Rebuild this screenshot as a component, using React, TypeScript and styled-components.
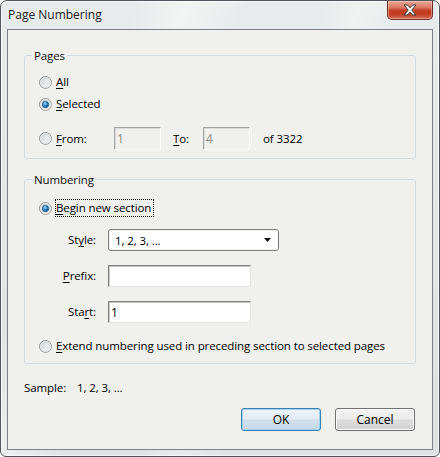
import React, { useId } from "react";
import styled, { createGlobalStyle } from "styled-components";

const GlobalStyle = createGlobalStyle`
  html, body { margin: 0; padding: 0; background: #ffffff; }
  body {
    font-family: "Open Sans", "Noto Sans", "Liberation Sans", sans-serif;
    font-size: 11.5px;
    letter-spacing: -0.1px;
    color: #000;
  }
  * { box-sizing: border-box; }
`;

const Window = styled.div`
  width: 440px;
  height: 457px;
  border: 1px solid #50565b;
  border-radius: 7px 7px 6px 6px;
  overflow: hidden;
  display: flex;
  flex-direction: column;
  background:
    linear-gradient(112deg, rgba(255,255,255,0) 22%, rgba(255,255,255,0.45) 30%, rgba(255,255,255,0) 40%, rgba(255,255,255,0) 52%, rgba(255,255,255,0.35) 58%, rgba(255,255,255,0) 66%),
    linear-gradient(180deg, #e8ebeb 0%, #e2e6e5 60%, #dde1e1 100%);
  box-shadow: inset 0 0 0 1px rgba(255, 255, 255, 0.7);
`;

const TitleBar = styled.div`
  height: 28px;
  flex: none;
  display: flex;
  align-items: flex-start;
  justify-content: space-between;
  padding-left: 7px;
`;

const Title = styled.div`
  margin-top: 6px;
  line-height: 16px;
  font-size: 12px;
  letter-spacing: 0;
  color: #1b1b1b;
  text-shadow: 0 0 6px rgba(255, 255, 255, 0.9);
`;

const CloseButton = styled.div`
  width: 46px;
  height: 19px;
  margin-right: 6px;
  display: flex;
  align-items: center;
  justify-content: center;
  border: 1px solid #6a3028;
  border-top: none;
  border-radius: 0 0 5px 5px;
  background: linear-gradient(
    180deg,
    #e9a797 0%,
    #dc7c66 35%,
    #c63f26 52%,
    #c03c22 72%,
    #d86c52 100%
  );
  box-shadow: inset 0 0 0 1px rgba(255, 220, 210, 0.45);
`;

const Client = styled.div`
  flex: 1;
  margin: 0 6px 6px;
  border: 1px solid #7b8186;
  background: #f0f0ef;
  display: flex;
  flex-direction: column;
  padding: 0 16px;
`;

const Group = styled.fieldset<{ $top: number; $padTop: number; $padBottom: number }>`
  margin: ${(p) => p.$top}px 0 0;
  padding: ${(p) => p.$padTop}px 0 ${(p) => p.$padBottom}px;
  border: 1px solid #d3dbe0;
  border-radius: 3px;
  min-width: 0;
  display: flex;
  flex-direction: column;
`;

const Legend = styled.legend`
  margin-left: 7px;
  padding: 0 2px;
  line-height: 15px;
  color: #111;
`;

const RadioRow = styled.div<{ $gap?: number }>`
  height: 22px;
  margin-top: ${(p) => p.$gap ?? 0}px;
  padding-left: 14px;
  display: flex;
  align-items: center;
  gap: 4px;
  white-space: nowrap;
`;

const RangeRow = styled.div<{ $gap?: number }>`
  height: 23px;
  margin-top: ${(p) => p.$gap ?? 0}px;
  padding-left: 14px;
  display: flex;
  align-items: center;
  white-space: nowrap;
`;

const RadioMark = styled.span`
  flex: none;
  width: 13px;
  height: 13px;
  display: block;
  line-height: 0;
`;

const Caption = styled.span<{ $width?: number }>`
  display: inline-block;
  width: ${(p) => (p.$width ? `${p.$width}px` : "auto")};
  flex: none;
  line-height: 16px;
`;

const FocusCaption = styled.span`
  line-height: 16px;
  padding-right: 2px;
  outline: 1px dotted #000;
  outline-offset: 0;
`;

const Key = styled.span`
  text-decoration: underline;
  text-underline-offset: 2px;
`;

const Edit = styled.div<{ $width: number; $height: number; $disabled?: boolean }>`
  flex: none;
  width: ${(p) => p.$width}px;
  height: ${(p) => p.$height}px;
  padding-left: 2px;
  display: flex;
  align-items: center;
  background: ${(p) => (p.$disabled ? "#f0f0ef" : "#ffffff")};
  color: ${(p) => (p.$disabled ? "#8c8c8c" : "#000")};
  border-style: solid;
  border-width: 1px;
  border-color: ${(p) =>
    p.$disabled ? "#a3a3a3 #ffffff #ffffff #a3a3a3" : "#808080 #e3e3e3 #e3e3e3 #808080"};
  box-shadow: ${(p) =>
    p.$disabled ? "inset 1px 1px 0 #dcdcdc" : "inset 1px 1px 0 #c4c4c4"};
  font-size: 12px;
`;

const Spacer = styled.span<{ $w: number }>`
  flex: none;
  width: ${(p) => p.$w}px;
`;

const FieldRow = styled.div<{ $gap: number }>`
  margin-top: ${(p) => p.$gap}px;
  padding-left: 31px;
  display: flex;
  align-items: center;
  gap: 12px;
`;

const FieldLabel = styled.span`
  width: 40px;
  flex: none;
  text-align: right;
  line-height: 16px;
`;

const Combo = styled.div`
  width: 171px;
  height: 22px;
  flex: none;
  display: flex;
  align-items: center;
  justify-content: space-between;
  padding: 0 7px 0 6px;
  background: #ffffff;
  border: 1px solid #7c7c7c;
  border-radius: 3px;
  box-shadow: inset 0 0 0 1px #f4f4f4;
`;

const SampleRow = styled.div`
  margin-top: 16px;
  display: flex;
  line-height: 15px;
`;

const Buttons = styled.div`
  margin-top: 12px;
  padding-right: 1px;
  display: flex;
  justify-content: flex-end;
  gap: 14px;
`;

const PushButton = styled.div<{ $default?: boolean }>`
  width: 80px;
  height: 23px;
  display: flex;
  align-items: center;
  justify-content: center;
  border-radius: 3px;
  font-size: 12px;
  letter-spacing: 0;
  border: 1px solid ${(p) => (p.$default ? "#3c7fb1" : "#707070")};
  background: ${(p) =>
    p.$default
      ? "linear-gradient(180deg, #eef4f9 0%, #e1ebf3 48%, #d1e0ec 52%, #c6d9e8 100%)"
      : "linear-gradient(180deg, #f3f3f3 0%, #ebebeb 48%, #dddddd 52%, #d2d2d2 100%)"};
  box-shadow: inset 0 0 0 1px ${(p) => (p.$default ? "#9fd2f0" : "#fcfcfc")};
`;

function Radio({ checked }: { checked?: boolean }) {
  const id = useId().replace(/:/g, "");
  return (
    <RadioMark>
      <svg width="13" height="13" viewBox="0 0 13 13">
        <defs>
          <linearGradient id={`ring${id}`} x1="0" y1="0" x2="1" y2="1">
            <stop offset="0" stopColor="#7e8386" />
            <stop offset="1" stopColor="#a9adb0" />
          </linearGradient>
          <linearGradient id={`well${id}`} x1="0" y1="0" x2="1" y2="1">
            <stop offset="0" stopColor="#d2d4d6" />
            <stop offset="1" stopColor="#fbfbfb" />
          </linearGradient>
          <radialGradient id={`dot${id}`} cx="0.4" cy="0.35" r="0.7">
            <stop offset="0" stopColor="#a9dbf7" />
            <stop offset="0.45" stopColor="#2d8ccc" />
            <stop offset="1" stopColor="#0c4b7e" />
          </radialGradient>
        </defs>
        <circle cx="6.5" cy="6.5" r="6" fill="#f4f4f4" stroke={`url(#ring${id})`} strokeWidth="1" />
        <circle cx="6.5" cy="6.5" r="4.6" fill={`url(#well${id})`} stroke="#d9dbdc" strokeWidth="0.8" />
        {checked && (
          <circle cx="6.5" cy="6.5" r="3.2" fill={`url(#dot${id})`} stroke="#1b4c74" strokeWidth="0.6" />
        )}
      </svg>
    </RadioMark>
  );
}

function CloseGlyph() {
  return (
    <svg width="14" height="12" viewBox="0 0 14 12">
      <defs>
        <linearGradient id="xfill" x1="0" y1="0" x2="0" y2="1">
          <stop offset="0" stopColor="#ffffff" />
          <stop offset="1" stopColor="#e2e2e2" />
        </linearGradient>
      </defs>
      <polygon
        points="1,1 4.6,1 7,3.8 9.4,1 13,1 8.8,6 13,11 9.4,11 7,8.2 4.6,11 1,11 5.2,6"
        fill="url(#xfill)"
        stroke="#3a3a3a"
        strokeWidth="1"
        strokeLinejoin="round"
      />
    </svg>
  );
}

function DropArrow() {
  return (
    <svg width="7" height="4" viewBox="0 0 7 4">
      <polygon points="0,0 7,0 3.5,4" fill="#111" />
    </svg>
  );
}

export default function App() {
  return (
    <>
      <GlobalStyle />
      <Window>
        <TitleBar>
          <Title>Page Numbering</Title>
          <CloseButton>
            <CloseGlyph />
          </CloseButton>
        </TitleBar>
        <Client>
          <Group $top={18} $padTop={8} $padBottom={8}>
            <Legend>Pages</Legend>
            <RadioRow>
              <Radio />
              <Caption>
                <Key>A</Key>ll
              </Caption>
            </RadioRow>
            <RadioRow>
              <Radio checked />
              <Caption>
                <Key>S</Key>elected
              </Caption>
            </RadioRow>
            <RangeRow $gap={12}>
              <Radio />
              <Spacer $w={4} />
              <Caption $width={58}>
                <Key>F</Key>rom:
              </Caption>
              <Edit $width={47} $height={23} $disabled>
                1
              </Edit>
              <Spacer $w={12} />
              <Caption $width={30}>
                <Key>T</Key>o:
              </Caption>
              <Edit $width={47} $height={23} $disabled>
                4
              </Edit>
              <Spacer $w={13} />
              <Caption>of 3322</Caption>
            </RangeRow>
          </Group>

          <Group $top={13} $padTop={10} $padBottom={6}>
            <Legend>Numbering</Legend>
            <RadioRow>
              <Radio checked />
              <FocusCaption>
                <Key>B</Key>egin new section
              </FocusCaption>
            </RadioRow>
            <FieldRow $gap={10}>
              <FieldLabel>
                St<Key>y</Key>le:
              </FieldLabel>
              <Combo>
                <span>1, 2, 3, ...</span>
                <DropArrow />
              </Combo>
            </FieldRow>
            <FieldRow $gap={14}>
              <FieldLabel>
                <Key>P</Key>refix:
              </FieldLabel>
              <Edit $width={143} $height={22} />
            </FieldRow>
            <FieldRow $gap={14}>
              <FieldLabel>
                Sta<Key>r</Key>t:
              </FieldLabel>
              <Edit $width={143} $height={22}>
                1
              </Edit>
            </FieldRow>
            <RadioRow $gap={12}>
              <Radio />
              <Caption>
                <Key>E</Key>xtend numbering used in preceding section to selected pages
              </Caption>
            </RadioRow>
          </Group>

          <SampleRow>
            <Caption $width={53}>Sample:</Caption>
            <Caption>1, 2, 3, ...</Caption>
          </SampleRow>

          <Buttons>
            <PushButton $default>OK</PushButton>
            <PushButton>Cancel</PushButton>
          </Buttons>
        </Client>
      </Window>
    </>
  );
}
